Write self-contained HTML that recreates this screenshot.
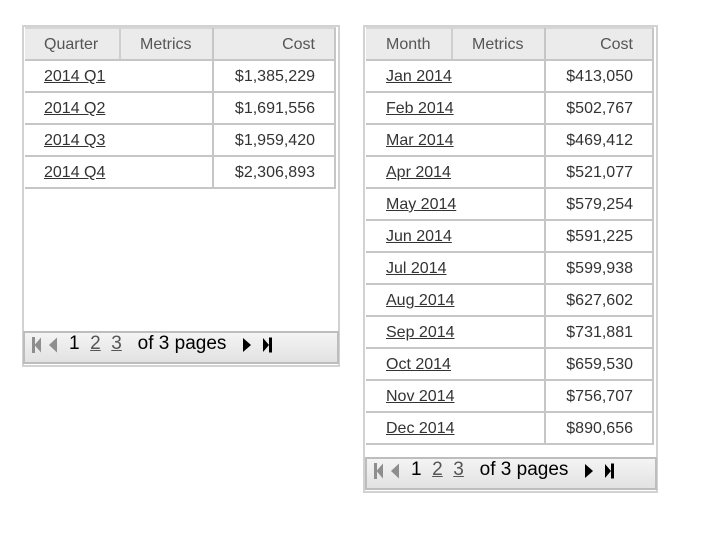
<!DOCTYPE html>
<html><head><style>
body{margin:0;width:713px;height:545px;background:#fff;position:relative;font-family:"Liberation Sans",sans-serif;overflow:hidden}
.a{position:absolute}
.pan{border:2px solid #d2d2d2;box-sizing:border-box}
.hb{background:#ebebeb}
.h{height:2px;background:#c6c6c6}
.v{width:2px;background:#c6c6c6}
.t{font-size:16px;line-height:32px;height:32px;color:#333;margin-top:1px}
.hd{color:#555;font-size:16px;line-height:31px;margin-top:1px}
u{text-decoration:underline}
.r{text-align:right}
.pg{border:2px solid #bdbdbd;box-sizing:border-box;background:linear-gradient(#f4f4f4,#e2e2e2)}
.pt{font-size:19px;line-height:28px;color:#000}
.pt u{color:#555}
</style></head><body>

<!-- LEFT -->
<div class="a pan" style="left:22px;top:25px;width:318px;height:342px"></div>
<div class="a hb" style="left:25px;top:28px;width:311px;height:31px"></div>
<div class="a h" style="left:25px;top:27px;width:311px;background:#d6d6d6"></div>
<div class="a v" style="left:119px;top:28px;height:31px;background:#cfcfcf"></div>
<div class="a v" style="left:212px;top:28px;height:161px"></div>
<div class="a v" style="left:334px;top:28px;height:161px"></div>
<div class="a h" style="left:25px;top:59px;width:311px"></div>
<div class="a h" style="left:25px;top:91px;width:311px"></div>
<div class="a h" style="left:25px;top:123px;width:311px"></div>
<div class="a h" style="left:25px;top:155px;width:311px"></div>
<div class="a h" style="left:25px;top:187px;width:311px"></div>
<div class="a hd" style="left:44px;top:28px">Quarter</div>
<div class="a hd" style="left:140px;top:28px">Metrics</div>
<div class="a hd r" style="left:214px;top:28px;width:101px">Cost</div>
<div class="a t" style="left:44px;top:60px"><u>2014 Q1</u></div>
<div class="a t r" style="left:214px;top:60px;width:101px">$1,385,229</div>
<div class="a t" style="left:44px;top:92px"><u>2014 Q2</u></div>
<div class="a t r" style="left:214px;top:92px;width:101px">$1,691,556</div>
<div class="a t" style="left:44px;top:124px"><u>2014 Q3</u></div>
<div class="a t r" style="left:214px;top:124px;width:101px">$1,959,420</div>
<div class="a t" style="left:44px;top:156px"><u>2014 Q4</u></div>
<div class="a t r" style="left:214px;top:156px;width:101px">$2,306,893</div>

<div class="a pg" style="left:23px;top:331px;width:316px;height:33px"></div>
<svg class="a" style="left:30px;top:336px" width="250" height="18">
<rect x="2" y="1" width="3" height="16" fill="#8e8e8e"/><path d="M4.5 9L11 1.5V16.5Z" fill="#8e8e8e"/>
<path d="M19 9L27 1.5V16.5Z" fill="#8e8e8e"/>
<path d="M213 2L221 9L213 16Z" fill="#000"/>
<path d="M233 2L239 9L233 16Z" fill="#000"/><rect x="239" y="1.5" width="3" height="15" fill="#000"/>
</svg>
<div class="a pt" style="left:69px;top:330px">1&nbsp;&nbsp;<u>2</u>&nbsp;&nbsp;<u>3</u>&nbsp;&nbsp;&nbsp;of 3 pages</div>

<!-- RIGHT -->
<div class="a pan" style="left:363px;top:25px;width:295px;height:468px"></div>
<div class="a hb" style="left:366px;top:28px;width:288px;height:31px"></div>
<div class="a h" style="left:366px;top:27px;width:288px;background:#d6d6d6"></div>
<div class="a v" style="left:451px;top:28px;height:31px;background:#cfcfcf"></div>
<div class="a v" style="left:544px;top:28px;height:417px"></div>
<div class="a v" style="left:652px;top:28px;height:417px"></div>
<div class="a h" style="left:366px;top:59px;width:288px"></div>
<div class="a h" style="left:366px;top:91px;width:288px"></div>
<div class="a h" style="left:366px;top:123px;width:288px"></div>
<div class="a h" style="left:366px;top:155px;width:288px"></div>
<div class="a h" style="left:366px;top:187px;width:288px"></div>
<div class="a h" style="left:366px;top:219px;width:288px"></div>
<div class="a h" style="left:366px;top:251px;width:288px"></div>
<div class="a h" style="left:366px;top:283px;width:288px"></div>
<div class="a h" style="left:366px;top:315px;width:288px"></div>
<div class="a h" style="left:366px;top:347px;width:288px"></div>
<div class="a h" style="left:366px;top:379px;width:288px"></div>
<div class="a h" style="left:366px;top:411px;width:288px"></div>
<div class="a h" style="left:366px;top:443px;width:288px"></div>
<div class="a hd" style="left:386px;top:28px">Month</div>
<div class="a hd" style="left:472px;top:28px">Metrics</div>
<div class="a hd r" style="left:546px;top:28px;width:87px">Cost</div>
<div class="a t" style="left:386px;top:60px"><u>Jan 2014</u></div><div class="a t r" style="left:546px;top:60px;width:87px">$413,050</div>
<div class="a t" style="left:386px;top:92px"><u>Feb 2014</u></div><div class="a t r" style="left:546px;top:92px;width:87px">$502,767</div>
<div class="a t" style="left:386px;top:124px"><u>Mar 2014</u></div><div class="a t r" style="left:546px;top:124px;width:87px">$469,412</div>
<div class="a t" style="left:386px;top:156px"><u>Apr 2014</u></div><div class="a t r" style="left:546px;top:156px;width:87px">$521,077</div>
<div class="a t" style="left:386px;top:188px"><u>May 2014</u></div><div class="a t r" style="left:546px;top:188px;width:87px">$579,254</div>
<div class="a t" style="left:386px;top:220px"><u>Jun 2014</u></div><div class="a t r" style="left:546px;top:220px;width:87px">$591,225</div>
<div class="a t" style="left:386px;top:252px"><u>Jul 2014</u></div><div class="a t r" style="left:546px;top:252px;width:87px">$599,938</div>
<div class="a t" style="left:386px;top:284px"><u>Aug 2014</u></div><div class="a t r" style="left:546px;top:284px;width:87px">$627,602</div>
<div class="a t" style="left:386px;top:316px"><u>Sep 2014</u></div><div class="a t r" style="left:546px;top:316px;width:87px">$731,881</div>
<div class="a t" style="left:386px;top:348px"><u>Oct 2014</u></div><div class="a t r" style="left:546px;top:348px;width:87px">$659,530</div>
<div class="a t" style="left:386px;top:380px"><u>Nov 2014</u></div><div class="a t r" style="left:546px;top:380px;width:87px">$756,707</div>
<div class="a t" style="left:386px;top:412px"><u>Dec 2014</u></div><div class="a t r" style="left:546px;top:412px;width:87px">$890,656</div>

<div class="a pg" style="left:365px;top:457px;width:292px;height:33px"></div>
<svg class="a" style="left:372px;top:462px" width="250" height="18">
<rect x="2" y="1" width="3" height="16" fill="#8e8e8e"/><path d="M4.5 9L11 1.5V16.5Z" fill="#8e8e8e"/>
<path d="M19 9L27 1.5V16.5Z" fill="#8e8e8e"/>
<path d="M213 2L221 9L213 16Z" fill="#000"/>
<path d="M233 2L239 9L233 16Z" fill="#000"/><rect x="239" y="1.5" width="3" height="15" fill="#000"/>
</svg>
<div class="a pt" style="left:411px;top:456px">1&nbsp;&nbsp;<u>2</u>&nbsp;&nbsp;<u>3</u>&nbsp;&nbsp;&nbsp;of 3 pages</div>
</body></html>
